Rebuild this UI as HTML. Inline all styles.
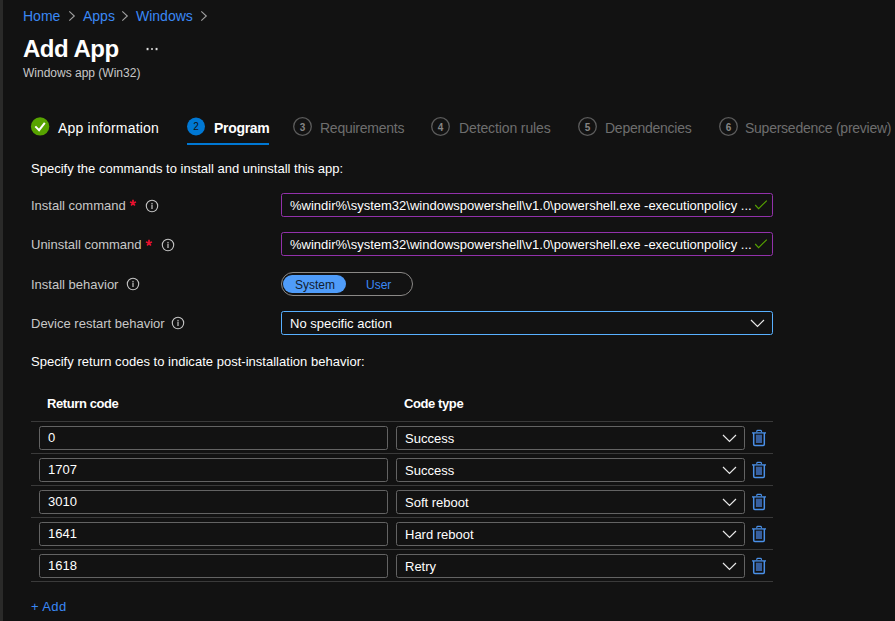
<!DOCTYPE html>
<html><head><meta charset="utf-8">
<style>
html,body{margin:0;padding:0;}
body{width:895px;height:621px;overflow:hidden;background:#121212;position:relative;font-family:"Liberation Sans",sans-serif;color:#fff;}
.a{position:absolute;white-space:pre;line-height:1;}
.strip{position:absolute;left:0;top:0;width:3px;height:621px;background:#2a2a29;}
.bc{font-size:14px;color:#3a88f5;}
.chev{position:absolute;width:5px;height:5px;border-right:1px solid #8a8a8a;border-top:1px solid #8a8a8a;transform:rotate(45deg);}
.title{font-size:24px;font-weight:700;color:#fff;}
.sub{font-size:12px;color:#c8c8c8;}
.tab{font-size:14px;color:#6e6e6e;}
.circ{position:absolute;width:16px;height:16px;border:1px solid #6e6e6e;border-radius:50%;box-sizing:content-box;font-size:10px;line-height:16px;text-align:center;color:#7a7a7a;font-weight:700;}
.t13{font-size:13px;}
.lbl{font-size:13px;color:#c8c8c8;}
.req{color:#e3302a;font-size:13px;}
.info{position:absolute;width:11px;height:11px;border:1px solid #bdbdbd;border-radius:50%;}
.info:before{content:"";position:absolute;left:5px;top:2px;width:1px;height:1px;background:#bdbdbd;}
.info:after{content:"";position:absolute;left:5px;top:4px;width:1px;height:5px;background:#bdbdbd;}
.box{position:absolute;box-sizing:border-box;border-radius:2.5px;}
.sep{position:absolute;left:31px;width:742px;height:1px;background:#3a3a3a;}
</style></head>
<body>
<div class="strip"></div>

<!-- breadcrumb -->
<div class="a bc" style="left:23px;top:9px;">Home</div>
<svg style="position:absolute;left:67px;top:10px" width="10" height="12" viewBox="0 0 10 12"><path d="M2.3 1.3 L7.3 6 L2.3 10.7" stroke="#a0a0a0" stroke-width="1.1" fill="none"/></svg>
<div class="a bc" style="left:83px;top:9px;">Apps</div>
<svg style="position:absolute;left:120px;top:10px" width="10" height="12" viewBox="0 0 10 12"><path d="M2.3 1.3 L7.3 6 L2.3 10.7" stroke="#a0a0a0" stroke-width="1.1" fill="none"/></svg>
<div class="a bc" style="left:136px;top:9px;">Windows</div>
<svg style="position:absolute;left:199px;top:10px" width="10" height="12" viewBox="0 0 10 12"><path d="M2.3 1.3 L7.3 6 L2.3 10.7" stroke="#a0a0a0" stroke-width="1.1" fill="none"/></svg>

<div class="a title" style="left:23px;top:37px;letter-spacing:-0.5px;">Add App</div>
<svg style="position:absolute;left:140px;top:40px" width="25" height="18"><rect x="6.6" y="7.9" width="1.9" height="2.3" fill="#e0e0e0"/><rect x="11" y="8" width="2" height="2" fill="#a8a8a8"/><rect x="15.6" y="7.9" width="1.9" height="2.3" fill="#e0e0e0"/></svg>
<div class="a sub" style="left:23px;top:67px;">Windows app (Win32)</div>

<!-- tabs -->
<svg style="position:absolute;left:30px;top:116px" width="20" height="20" viewBox="0 0 20 20"><circle cx="10.1" cy="10.4" r="9.2" fill="#57a300"/><path d="M5.3 10.4 L9.1 14.2 L14.8 6.8" stroke="#fff" stroke-width="2" fill="none"/></svg>
<div class="a tab" style="left:58px;top:121px;color:#fff;letter-spacing:0.2px;">App information</div>

<svg style="position:absolute;left:186px;top:117px" width="20" height="20" viewBox="0 0 20 20"><circle cx="10" cy="9.5" r="9" fill="#0078d4"/><text x="10" y="13" text-anchor="middle" font-family="Liberation Sans" font-size="10" fill="#111">2</text></svg>
<div class="a tab" style="left:214px;top:121px;color:#fff;font-weight:700;letter-spacing:-0.3px;">Program</div>
<div style="position:absolute;left:187px;top:143px;width:82px;height:2px;background:#0078d4;"></div>

<svg style="position:absolute;left:292px;top:116px" width="20" height="20" viewBox="0 0 20 20"><circle cx="10.5" cy="10.5" r="8.8" stroke="#5c5c5c" stroke-width="1.3" fill="none"/><text x="10.5" y="14.6" text-anchor="middle" font-family="Liberation Sans" font-weight="700" font-size="10" fill="#858585">3</text></svg>
<div class="a tab" style="left:320px;top:121px;letter-spacing:-0.25px;">Requirements</div>
<svg style="position:absolute;left:430px;top:116px" width="20" height="20" viewBox="0 0 20 20"><circle cx="10.5" cy="10.5" r="8.8" stroke="#5c5c5c" stroke-width="1.3" fill="none"/><text x="10.5" y="14.6" text-anchor="middle" font-family="Liberation Sans" font-weight="700" font-size="10" fill="#858585">4</text></svg>
<div class="a tab" style="left:459px;top:121px;letter-spacing:-0.12px;">Detection rules</div>
<svg style="position:absolute;left:577px;top:116px" width="20" height="20" viewBox="0 0 20 20"><circle cx="10.5" cy="10.5" r="8.8" stroke="#5c5c5c" stroke-width="1.3" fill="none"/><text x="10.5" y="14.6" text-anchor="middle" font-family="Liberation Sans" font-weight="700" font-size="10" fill="#858585">5</text></svg>
<div class="a tab" style="left:605px;top:121px;letter-spacing:-0.25px;">Dependencies</div>
<svg style="position:absolute;left:718px;top:116px" width="20" height="20" viewBox="0 0 20 20"><circle cx="10.5" cy="10.5" r="8.8" stroke="#5c5c5c" stroke-width="1.3" fill="none"/><text x="10.5" y="14.6" text-anchor="middle" font-family="Liberation Sans" font-weight="700" font-size="10" fill="#858585">6</text></svg>
<div class="a tab" style="left:745px;top:121px;letter-spacing:-0.25px;">Supersedence (preview)</div>

<div class="a t13" style="left:31px;top:162px;">Specify the commands to install and uninstall this app:</div>

<!-- form -->
<div class="a lbl" style="left:31px;top:199px;">Install command</div><svg style="position:absolute;left:125px;top:195px" width="16" height="16" viewBox="0 0 16 16"><path d="M8.00 8.00 L8.00 4.80 M8.00 8.00 L11.04 7.01 M8.00 8.00 L9.88 10.59 M8.00 8.00 L6.12 10.59 M8.00 8.00 L4.96 7.01 " stroke="#e8112d" stroke-width="1.7" stroke-linecap="butt" fill="none"/></svg>
<svg style="position:absolute;left:144px;top:198px" width="16" height="16" viewBox="0 0 16 16"><circle cx="8" cy="8" r="5.7" stroke="#c4c4c4" stroke-width="1.1" fill="none"/><rect x="7.2" y="4.9" width="1.6" height="1.2" fill="#9a9a9a"/><rect x="7.2" y="6.6" width="1.6" height="4.4" fill="#9a9a9a"/></svg>
<div class="box" style="left:281px;top:193px;width:492px;height:24px;border:1px solid #9231aa;"></div>
<div class="a t13" style="left:290px;top:199px;">%windir%\system32\windowspowershell\v1.0\powershell.exe -executionpolicy ...</div>
<svg style="position:absolute;left:754px;top:199px" width="14" height="11" viewBox="0 0 14 11"><path d="M1.2 6 L4.6 9.6 L12.8 1.6" stroke="#57a300" stroke-width="1.1" fill="none"/></svg>

<div class="a lbl" style="left:31px;top:238px;">Uninstall command</div><svg style="position:absolute;left:141px;top:235px" width="16" height="16" viewBox="0 0 16 16"><path d="M8.00 8.00 L8.00 4.80 M8.00 8.00 L11.04 7.01 M8.00 8.00 L9.88 10.59 M8.00 8.00 L6.12 10.59 M8.00 8.00 L4.96 7.01 " stroke="#e8112d" stroke-width="1.7" stroke-linecap="butt" fill="none"/></svg>
<svg style="position:absolute;left:160px;top:237px" width="16" height="16" viewBox="0 0 16 16"><circle cx="8" cy="8" r="5.7" stroke="#c4c4c4" stroke-width="1.1" fill="none"/><rect x="7.2" y="4.9" width="1.6" height="1.2" fill="#9a9a9a"/><rect x="7.2" y="6.6" width="1.6" height="4.4" fill="#9a9a9a"/></svg>
<div class="box" style="left:281px;top:232px;width:492px;height:24px;border:1px solid #9231aa;"></div>
<div class="a t13" style="left:290px;top:238px;">%windir%\system32\windowspowershell\v1.0\powershell.exe -executionpolicy ...</div>
<svg style="position:absolute;left:754px;top:238px" width="14" height="11" viewBox="0 0 14 11"><path d="M1.2 6 L4.6 9.6 L12.8 1.6" stroke="#57a300" stroke-width="1.1" fill="none"/></svg>

<div class="a lbl" style="left:31px;top:278px;">Install behavior</div>
<svg style="position:absolute;left:125px;top:276px" width="16" height="16" viewBox="0 0 16 16"><circle cx="8" cy="8" r="5.7" stroke="#c4c4c4" stroke-width="1.1" fill="none"/><rect x="7.2" y="4.9" width="1.6" height="1.2" fill="#9a9a9a"/><rect x="7.2" y="6.6" width="1.6" height="4.4" fill="#9a9a9a"/></svg>
<div class="box" style="left:281px;top:272px;width:132px;height:24px;border:1px solid #8a8886;border-radius:12px;"></div>
<div class="box" style="left:283px;top:275px;width:63px;height:18px;background:#4f9cf9;border-radius:9px;"></div>
<div class="a" style="left:295px;top:279px;font-size:12px;color:#121c30;">System</div>
<div class="a" style="left:366px;top:279px;font-size:12px;color:#3a88f5;">User</div>

<div class="a lbl" style="left:31px;top:317px;">Device restart behavior</div>
<svg style="position:absolute;left:170px;top:315px" width="16" height="16" viewBox="0 0 16 16"><circle cx="8" cy="8" r="5.7" stroke="#c4c4c4" stroke-width="1.1" fill="none"/><rect x="7.2" y="4.9" width="1.6" height="1.2" fill="#9a9a9a"/><rect x="7.2" y="6.6" width="1.6" height="4.4" fill="#9a9a9a"/></svg>
<div class="box" style="left:281px;top:311px;width:492px;height:24px;border:1px solid #58b0ff;"></div>
<div class="a t13" style="left:290px;top:317px;">No specific action</div>
<svg style="position:absolute;left:750px;top:319px" width="15" height="9" viewBox="0 0 15 9"><path d="M1 1 L7.5 7.5 L14 1" stroke="#e8e8e8" stroke-width="1.2" fill="none"/></svg>

<div class="a t13" style="left:31px;top:355px;letter-spacing:0.02px;">Specify return codes to indicate post-installation behavior:</div>

<div class="a t13" style="left:47px;top:397px;font-weight:700;letter-spacing:-0.4px;">Return code</div>
<div class="a t13" style="left:404px;top:397px;font-weight:700;letter-spacing:-0.4px;">Code type</div>

<div id="rows">
<div class="sep" style="top:421px;"></div>
<div class="box" style="left:39px;top:426px;width:349px;height:24px;border:1px solid #636363;"></div>
<div class="a t13" style="left:48px;top:431px;">0</div>
<div class="box" style="left:396px;top:426px;width:349px;height:24px;border:1px solid #636363;"></div>
<div class="a t13" style="left:405px;top:432px;">Success</div>
<svg style="position:absolute;left:722px;top:434px" width="15" height="9" viewBox="0 0 15 9"><path d="M1 1 L7.5 7.5 L14 1" stroke="#e8e8e8" stroke-width="1.2" fill="none"/></svg>
<svg style="position:absolute;left:752px;top:429px" width="14" height="18" viewBox="0 0 14 18"><path d="M4.8 3.2 V2.3 Q4.8 1.4 5.7 1.4 H8.5 Q9.4 1.4 9.4 2.3 V3.2" stroke="#4a90e8" stroke-width="1.1" fill="none"/><path d="M0 3.9 H14" stroke="#4a90e8" stroke-width="1.3"/><path d="M1.7 3.9 V15.3 Q1.7 16.4 2.8 16.4 H11.2 Q12.3 16.4 12.3 15.3 V3.9" stroke="#4a90e8" stroke-width="1.5" fill="none"/><rect x="3.9" y="5.7" width="6.1" height="8.3" fill="#375f9e"/></svg>
<div class="sep" style="top:453px;"></div>
<div class="box" style="left:39px;top:458px;width:349px;height:24px;border:1px solid #636363;"></div>
<div class="a t13" style="left:48px;top:463px;">1707</div>
<div class="box" style="left:396px;top:458px;width:349px;height:24px;border:1px solid #636363;"></div>
<div class="a t13" style="left:405px;top:464px;">Success</div>
<svg style="position:absolute;left:722px;top:466px" width="15" height="9" viewBox="0 0 15 9"><path d="M1 1 L7.5 7.5 L14 1" stroke="#e8e8e8" stroke-width="1.2" fill="none"/></svg>
<svg style="position:absolute;left:752px;top:461px" width="14" height="18" viewBox="0 0 14 18"><path d="M4.8 3.2 V2.3 Q4.8 1.4 5.7 1.4 H8.5 Q9.4 1.4 9.4 2.3 V3.2" stroke="#4a90e8" stroke-width="1.1" fill="none"/><path d="M0 3.9 H14" stroke="#4a90e8" stroke-width="1.3"/><path d="M1.7 3.9 V15.3 Q1.7 16.4 2.8 16.4 H11.2 Q12.3 16.4 12.3 15.3 V3.9" stroke="#4a90e8" stroke-width="1.5" fill="none"/><rect x="3.9" y="5.7" width="6.1" height="8.3" fill="#375f9e"/></svg>
<div class="sep" style="top:485px;"></div>
<div class="box" style="left:39px;top:490px;width:349px;height:24px;border:1px solid #636363;"></div>
<div class="a t13" style="left:48px;top:495px;">3010</div>
<div class="box" style="left:396px;top:490px;width:349px;height:24px;border:1px solid #636363;"></div>
<div class="a t13" style="left:405px;top:496px;">Soft reboot</div>
<svg style="position:absolute;left:722px;top:498px" width="15" height="9" viewBox="0 0 15 9"><path d="M1 1 L7.5 7.5 L14 1" stroke="#e8e8e8" stroke-width="1.2" fill="none"/></svg>
<svg style="position:absolute;left:752px;top:493px" width="14" height="18" viewBox="0 0 14 18"><path d="M4.8 3.2 V2.3 Q4.8 1.4 5.7 1.4 H8.5 Q9.4 1.4 9.4 2.3 V3.2" stroke="#4a90e8" stroke-width="1.1" fill="none"/><path d="M0 3.9 H14" stroke="#4a90e8" stroke-width="1.3"/><path d="M1.7 3.9 V15.3 Q1.7 16.4 2.8 16.4 H11.2 Q12.3 16.4 12.3 15.3 V3.9" stroke="#4a90e8" stroke-width="1.5" fill="none"/><rect x="3.9" y="5.7" width="6.1" height="8.3" fill="#375f9e"/></svg>
<div class="sep" style="top:517px;"></div>
<div class="box" style="left:39px;top:522px;width:349px;height:24px;border:1px solid #636363;"></div>
<div class="a t13" style="left:48px;top:527px;">1641</div>
<div class="box" style="left:396px;top:522px;width:349px;height:24px;border:1px solid #636363;"></div>
<div class="a t13" style="left:405px;top:528px;">Hard reboot</div>
<svg style="position:absolute;left:722px;top:530px" width="15" height="9" viewBox="0 0 15 9"><path d="M1 1 L7.5 7.5 L14 1" stroke="#e8e8e8" stroke-width="1.2" fill="none"/></svg>
<svg style="position:absolute;left:752px;top:525px" width="14" height="18" viewBox="0 0 14 18"><path d="M4.8 3.2 V2.3 Q4.8 1.4 5.7 1.4 H8.5 Q9.4 1.4 9.4 2.3 V3.2" stroke="#4a90e8" stroke-width="1.1" fill="none"/><path d="M0 3.9 H14" stroke="#4a90e8" stroke-width="1.3"/><path d="M1.7 3.9 V15.3 Q1.7 16.4 2.8 16.4 H11.2 Q12.3 16.4 12.3 15.3 V3.9" stroke="#4a90e8" stroke-width="1.5" fill="none"/><rect x="3.9" y="5.7" width="6.1" height="8.3" fill="#375f9e"/></svg>
<div class="sep" style="top:549px;"></div>
<div class="box" style="left:39px;top:554px;width:349px;height:24px;border:1px solid #636363;"></div>
<div class="a t13" style="left:48px;top:559px;">1618</div>
<div class="box" style="left:396px;top:554px;width:349px;height:24px;border:1px solid #636363;"></div>
<div class="a t13" style="left:405px;top:560px;">Retry</div>
<svg style="position:absolute;left:722px;top:562px" width="15" height="9" viewBox="0 0 15 9"><path d="M1 1 L7.5 7.5 L14 1" stroke="#e8e8e8" stroke-width="1.2" fill="none"/></svg>
<svg style="position:absolute;left:752px;top:557px" width="14" height="18" viewBox="0 0 14 18"><path d="M4.8 3.2 V2.3 Q4.8 1.4 5.7 1.4 H8.5 Q9.4 1.4 9.4 2.3 V3.2" stroke="#4a90e8" stroke-width="1.1" fill="none"/><path d="M0 3.9 H14" stroke="#4a90e8" stroke-width="1.3"/><path d="M1.7 3.9 V15.3 Q1.7 16.4 2.8 16.4 H11.2 Q12.3 16.4 12.3 15.3 V3.9" stroke="#4a90e8" stroke-width="1.5" fill="none"/><rect x="3.9" y="5.7" width="6.1" height="8.3" fill="#375f9e"/></svg>
<div class="sep" style="top:581px;"></div>
</div>
<div class="a t13" style="left:31px;top:600px;color:#3a88f5;letter-spacing:0.4px;">+ Add</div>
</body></html>
